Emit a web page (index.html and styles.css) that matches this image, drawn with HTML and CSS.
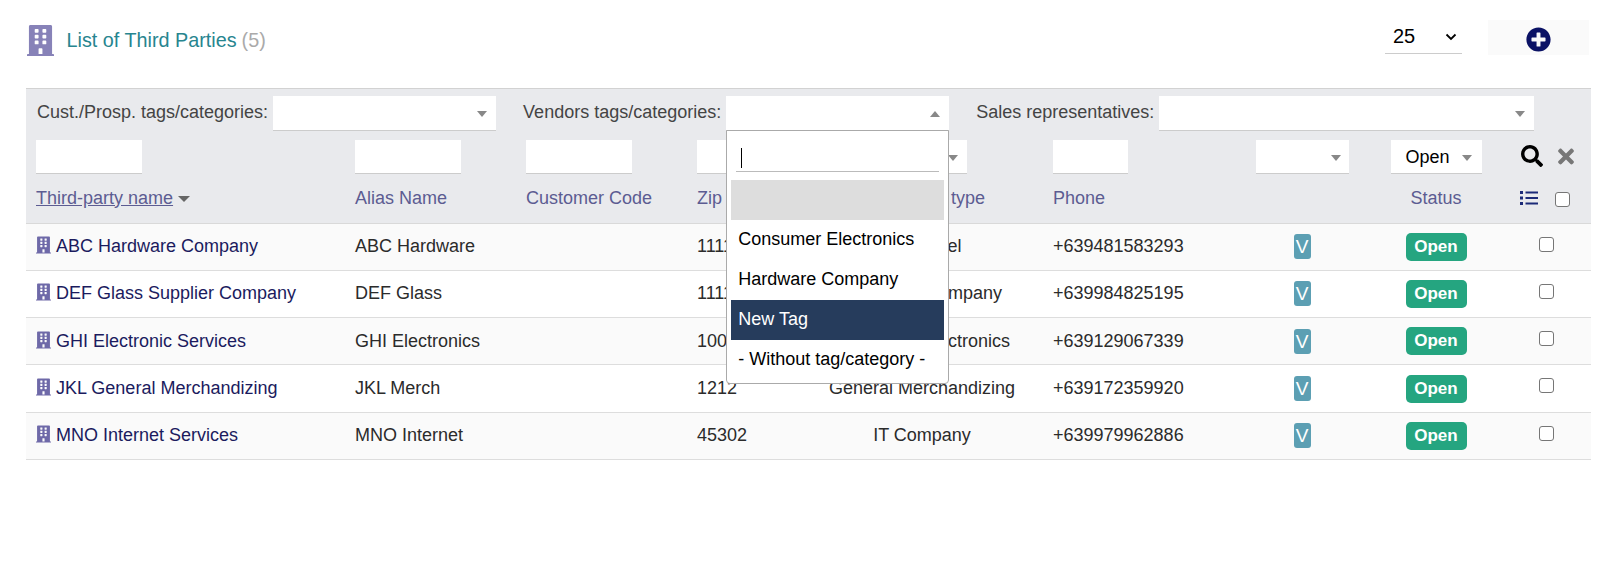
FILE: index.html
```html
<!DOCTYPE html>
<html lang="en">
<head>
<meta charset="utf-8">
<title>List of Third Parties</title>
<link rel="stylesheet" href="styles.css">
</head>
<body>
<svg class="defs" width="0" height="0" aria-hidden="true">
  <symbol id="building" viewBox="0 0 448 512"><path d="M436 480h-20V24c0-13.255-10.745-24-24-24H56C42.745 0 32 10.745 32 24v456H12c-6.627 0-12 5.373-12 12v20h448v-20c0-6.627-5.373-12-12-12zM128 76c0-6.627 5.373-12 12-12h40c6.627 0 12 5.373 12 12v40c0 6.627-5.373 12-12 12h-40c-6.627 0-12-5.373-12-12V76zm0 96c0-6.627 5.373-12 12-12h40c6.627 0 12 5.373 12 12v40c0 6.627-5.373 12-12 12h-40c-6.627 0-12-5.373-12-12v-40zm52 148h-40c-6.627 0-12-5.373-12-12v-40c0-6.627 5.373-12 12-12h40c6.627 0 12 5.373 12 12v40c0 6.627-5.373 12-12 12zm76 160h-64v-84c0-6.627 5.373-12 12-12h40c6.627 0 12 5.373 12 12v84zm64-172c0 6.627-5.373 12-12 12h-40c-6.627 0-12-5.373-12-12v-40c0-6.627 5.373-12 12-12h40c6.627 0 12 5.373 12 12v40zm0-96c0 6.627-5.373 12-12 12h-40c-6.627 0-12-5.373-12-12v-40c0-6.627 5.373-12 12-12h40c6.627 0 12 5.373 12 12v40zm0-96c0 6.627-5.373 12-12 12h-40c-6.627 0-12-5.373-12-12V76c0-6.627 5.373-12 12-12h40c6.627 0 12 5.373 12 12v40z"/></symbol>
</svg>
<div class="page">
  <header class="titlebar">
    <div class="title">
      <svg class="title-icon"><use href="#building"/></svg>
      <span class="title-text">List of Third Parties</span> <span class="title-count">(5)</span>
    </div>
    <div class="title-actions">
      <div class="perpage"><span>25</span>
        <svg class="chev" viewBox="0 0 12 8"><path d="M1.5 1.5 6 6l4.500-4.500" fill="none" stroke="#000" stroke-width="1.800"/></svg>
      </div>
      <div class="addbtn">
        <svg class="plus" viewBox="0 0 512 512"><path d="M256 8C119 8 8 119 8 256s111 248 248 248 248-111 248-248S393 8 256 8zm144 276c0 6.600-5.400 12-12 12h-92v92c0 6.600-5.400 12-12 12h-56c-6.600 0-12-5.400-12-12v-92h-92c-6.600 0-12-5.400-12-12v-56c0-6.600 5.400-12 12-12h92v-92c0-6.600 5.400-12 12-12h56c6.600 0 12 5.400 12 12v92h92c6.600 0 12 5.400 12 12v56z"/></svg>
      </div>
    </div>
  </header>

  <section class="panel">
    <div class="tagfilters">
      <span class="tag-label">Cust./Prosp. tags/categories:</span>
      <div class="fsel tag-cust"><i class="caret"></i></div>
      <span class="tag-label tag-vend-label">Vendors tags/categories:</span>
      <div class="fsel tag-vend"><i class="caret up"></i>
        <div class="dropdown">
          <div class="dd-search"><span class="cursor"></span></div>
          <ul class="dd-list">
            <li class="dd-blank">&nbsp;</li>
            <li>Consumer Electronics</li>
            <li>Hardware Company</li>
            <li class="dd-active">New Tag</li>
            <li>- Without tag/category -</li>
          </ul>
        </div>
      </div>
      <span class="tag-label tag-sales-label">Sales representatives:</span>
      <div class="fsel tag-sales"><i class="caret"></i></div>
    </div>

    <table class="list">
      <colgroup>
        <col class="c-name"><col class="c-alias"><col class="c-code"><col class="c-zip"><col class="c-type"><col class="c-phone"><col class="c-v"><col class="c-status"><col class="c-act">
      </colgroup>
      <thead>
        <tr class="filter-row">
          <td><input class="finput" type="text" aria-label="Third-party name"></td>
          <td><input class="finput" type="text" aria-label="Alias"></td>
          <td><input class="finput" type="text" aria-label="Customer code"></td>
          <td><input class="finput" type="text" aria-label="Zip"></td>
          <td class="center"><div class="fsel fsel-type"><i class="caret"></i></div></td>
          <td><input class="finput finput-phone" type="text" aria-label="Phone"></td>
          <td class="center"><div class="fsel fsel-v"><i class="caret"></i></div></td>
          <td class="center"><div class="fsel fsel-status"><span>Open</span><i class="caret"></i></div></td>
          <td class="act-cell">
            <svg class="i-search" viewBox="0 0 512 512"><path d="M505 442.700L405.300 343c-4.500-4.500-10.600-7-17-7H372c27.600-35.300 44-79.700 44-128C416 93.100 322.900 0 208 0S0 93.100 0 208s93.100 208 208 208c48.300 0 92.700-16.400 128-44v16.300c0 6.400 2.500 12.500 7 17l99.700 99.700c9.400 9.400 24.600 9.400 33.900 0l28.300-28.300c9.400-9.400 9.400-24.600.1-34zM208 336c-70.700 0-128-57.200-128-128 0-70.700 57.200-128 128-128 70.700 0 128 57.200 128 128 0 70.700-57.200 128-128 128z"/></svg>
            <svg class="i-times" viewBox="0 0 352 512"><path d="M242.720 256l100.070-100.070c12.280-12.280 12.280-32.190 0-44.480l-22.240-22.240c-12.280-12.280-32.190-12.280-44.480 0L176 189.280 75.930 89.210c-12.280-12.280-32.190-12.280-44.480 0L9.210 111.450c-12.280 12.280-12.280 32.190 0 44.480L109.280 256 9.210 356.070c-12.280 12.280-12.280 32.190 0 44.480l22.240 22.240c12.280 12.280 32.200 12.280 44.480 0L176 322.720l100.070 100.070c12.280 12.280 32.200 12.280 44.480 0l22.240-22.240c12.280-12.280 12.280-32.190 0-44.480L242.720 256z"/></svg>
          </td>
        </tr>
        <tr class="head-row">
          <th><a class="sorted" href="#">Third-party name</a><i class="sort-caret"></i></th>
          <th>Alias Name</th>
          <th>Customer Code</th>
          <th>Zip Code</th>
          <th class="center">Third-party type</th>
          <th>Phone</th>
          <th></th>
          <th class="center">Status</th>
          <th class="act-cell">
            <svg class="i-list" viewBox="0 0 18 14"><path d="M0 0h3v3H0zM0 5.500h3v3H0zM0 11h3v3H0zM5.500 .5H18v2H5.500zM5.500 6H18v2H5.500zM5.500 11.500H18v2H5.500z"/></svg>
            <input class="check" type="checkbox" aria-label="Select all">
          </th>
        </tr>
      </thead>
      <tbody>
        <tr>
          <td><svg class="i-co"><use href="#building"/></svg><a href="#">ABC Hardware Company</a></td>
          <td>ABC Hardware</td><td></td><td>11111</td><td class="center">Spa Hotel</td><td>+639481583293</td>
          <td class="center"><span class="badge-v">V</span></td><td class="center"><span class="badge-open">Open</span></td>
          <td class="center"><input class="check" type="checkbox" aria-label="Select row"></td>
        </tr>
        <tr>
          <td><svg class="i-co"><use href="#building"/></svg><a href="#">DEF Glass Supplier Company</a></td>
          <td>DEF Glass</td><td></td><td>11111</td><td class="center">Hardware Company</td><td>+639984825195</td>
          <td class="center"><span class="badge-v">V</span></td><td class="center"><span class="badge-open">Open</span></td>
          <td class="center"><input class="check" type="checkbox" aria-label="Select row"></td>
        </tr>
        <tr>
          <td><svg class="i-co"><use href="#building"/></svg><a href="#">GHI Electronic Services</a></td>
          <td>GHI Electronics</td><td></td><td>10001</td><td class="center">Consumer Electronics</td><td>+639129067339</td>
          <td class="center"><span class="badge-v">V</span></td><td class="center"><span class="badge-open">Open</span></td>
          <td class="center"><input class="check" type="checkbox" aria-label="Select row"></td>
        </tr>
        <tr>
          <td><svg class="i-co"><use href="#building"/></svg><a href="#">JKL General Merchandizing</a></td>
          <td>JKL Merch</td><td></td><td>1212</td><td class="center">General Merchandizing</td><td>+639172359920</td>
          <td class="center"><span class="badge-v">V</span></td><td class="center"><span class="badge-open">Open</span></td>
          <td class="center"><input class="check" type="checkbox" aria-label="Select row"></td>
        </tr>
        <tr>
          <td><svg class="i-co"><use href="#building"/></svg><a href="#">MNO Internet Services</a></td>
          <td>MNO Internet</td><td></td><td>45302</td><td class="center">IT Company</td><td>+639979962886</td>
          <td class="center"><span class="badge-v">V</span></td><td class="center"><span class="badge-open">Open</span></td>
          <td class="center"><input class="check" type="checkbox" aria-label="Select row"></td>
        </tr>
      </tbody>
    </table>
  </section>
</div>
</body>
</html>
```

FILE: styles.css
```css
* { box-sizing: border-box; }
html, body { margin: 0; padding: 0; background: #fff; }
body { font-family: "Liberation Sans", Arial, sans-serif; font-size: 18px; color: #2b2b2b; }
.defs { position: absolute; }

.page { padding: 20px 24px 0 26px; }

.titlebar { display: flex; justify-content: space-between; align-items: flex-start; height: 35px; margin-bottom: 33px; }
.title { display: flex; align-items: center; height: 41px; font-size: 19.800px; color: #aaa; white-space: pre; padding-left: 1px; }
.title-icon { width: 27px; height: 31px; fill: #8782b8; margin-right: 12.500px; }
.title-text { color: #27858f; }
.title-count { margin-left: 5px; color: #aaa; }

.title-actions { display: flex; align-items: flex-start; margin-right: 2px; }
.perpage { width: 77px; height: 34px; display: flex; align-items: center; justify-content: space-between; padding: 1px 5px 1px 8px; border-bottom: 1px solid #ccc; font-size: 20px; color: #000; margin-right: 26px; }
.chev { width: 12px; height: 8px; }
.addbtn { width: 101px; height: 35px; padding-top: 3px; background: #fafafa; display: flex; align-items: center; justify-content: center; }
.plus { width: 25px; height: 25px; fill: #0b1265; }

.panel { border-top: 1px solid #d2d2d2; background: #e9eaed; position: relative; }

.tagfilters { display: flex; align-items: center; height: 42px; padding: 7px 0 0 11px; color: #444; }
.tag-label { white-space: nowrap; margin: 0 5px 3px 0; }
.tag-vend-label { margin-left: 27px; }
.tag-sales-label { margin-left: 27px; }

.fsel { position: relative; height: 34px; background: #fff; border-bottom: 1px solid #ccc; color: #000; display: flex; align-items: center; }
.tag-cust, .tag-vend { width: 223px; }
.tag-sales { width: 375px; }
.tagfilters .fsel { height: 35px; }
.caret { position: absolute; right: 9px; top: 15px; width: 0; height: 0; border-left: 5px solid transparent; border-right: 5px solid transparent; border-top: 6px solid #888; }
.caret.up { border-top: 0; border-bottom: 6px solid #888; }

.dropdown { position: absolute; left: 0; top: 100%; right: 0; height: 254px; background: #fff; border: 1px solid #aaa; border-radius: 0 0 4px 4px; padding: 4px 4px 0; z-index: 5; }
.dd-search { height: 37px; margin: 0 5px; border-bottom: 1px solid #bbb; position: relative; }
.cursor { position: absolute; left: 5px; top: 13px; width: 1px; height: 20px; background: #000; }
.dd-list { list-style: none; margin: 8px 0 0; padding: 0; }
.dd-list li { height: 40px; line-height: 38px; padding-left: 7px; color: #000; white-space: nowrap; }
.dd-list .dd-blank { background: #ddd; }
.dd-list .dd-active { background: #263c5c; color: #fff; }

.list { width: 100%; border-collapse: collapse; table-layout: fixed; }
.c-name { width: 319px; }
.c-alias { width: 171px; }
.c-code { width: 171px; }
.c-zip { width: 114px; }
.c-type { width: 242px; }
.c-phone { width: 192px; }
.c-v { width: 134px; }
.c-status { width: 134px; }
.c-act { width: 88px; }

.list td, .list th { padding: 0 10px; text-align: left; font-weight: 400; white-space: nowrap; overflow: hidden; }
.list .center { text-align: center; }

.filter-row td { height: 43px; padding-top: 9px; vertical-align: middle; }
.finput { display: block; width: 106px; height: 34px; border: 0; border-bottom: 1px solid #ccc; background: #fff; padding: 0; outline: 0; }
.finput-phone { width: 75px; }
.filter-row .fsel { margin: 0 auto; }
.fsel-type { width: 90px; }
.fsel-v { width: 93px; }
.fsel-v .caret { right: 8px; }
.fsel-status { width: 91px; padding: 2px 0 0 15px; font-size: 18px; }
.fsel-status .caret { right: 10px; }

.act-cell { white-space: nowrap; }
.list .act-cell { padding: 0 0 0 17px; }
.filter-row .act-cell { padding: 7px 0 0 18px; }
.i-search { width: 22px; height: 22px; fill: #000; vertical-align: middle; }
.i-times { width: 16px; height: 23px; fill: #777; margin-left: 10px; vertical-align: middle; }
.i-list { width: 18px; height: 14px; fill: #1c2a78; vertical-align: middle; margin: 0 12px 3px 0; }

.head-row th { height: 49px; color: #5c5c92; vertical-align: middle; border-bottom: 1px solid #d9d9d9; }
.sorted { color: #5c5c92; text-decoration: underline; }
.sort-caret { display: inline-block; width: 0; height: 0; margin-left: 5px; vertical-align: middle; border-left: 6px solid transparent; border-right: 6px solid transparent; border-top: 6px solid #666; }

tbody tr { height: 47.300px; border-bottom: 1px solid #ddd; background: #fff; }
tbody tr:nth-child(odd) { background: #fafafa; }
tbody a { color: #1b1b5e; text-decoration: none; }
.i-co { width: 15px; height: 18px; fill: #6e69a8; margin-right: 5px; vertical-align: -2px; }

.badge-v { display: inline-block; width: 17px; height: 25px; line-height: 25px; border-radius: 3px; background: #5c9fb3; color: #fff; text-align: center; font-size: 19px; }
.badge-open { display: inline-block; width: 61px; height: 28px; line-height: 27px; border-radius: 5px; background: #25a580; color: #fff; text-align: center; font-size: 17px; font-weight: 700; }

.check { appearance: none; width: 15px; height: 15px; margin: 0; border: 1.500px solid #767676; border-radius: 3px; background: #fff; vertical-align: middle; }
tbody .check { margin: 0 2px 6px 0; }
```
